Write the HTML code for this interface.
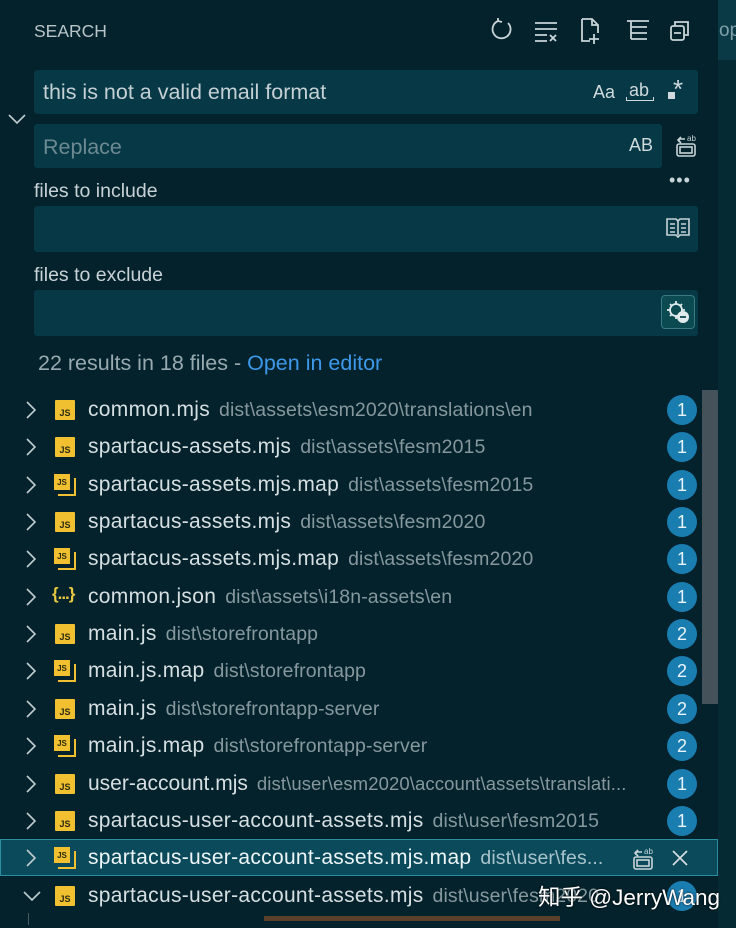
<!DOCTYPE html>
<html><head><meta charset="utf-8"><style>
*{margin:0;padding:0;box-sizing:border-box}
body{width:736px;height:928px;background:#03222b;font-family:"Liberation Sans","Noto Sans CJK SC",sans-serif;color:#d4dde0;position:relative;overflow:hidden}
.a{position:absolute;white-space:nowrap}
.strip{left:718px;top:0;width:18px;height:928px;background:#052a33}
.inp{background:#063845;border-radius:3px}
.lbl{font-size:19.5px;color:#c8d2d6}
.row{position:absolute;left:0;width:718px;height:37px}
.chev{position:absolute;left:24px;top:9px}
.js{position:absolute;left:55px;top:9px;width:20px;height:20px;background:#f0c030;color:#2a2a10;font-size:9px;font-weight:bold;text-align:center;line-height:26px;border-radius:1px}
.jsm{position:absolute;left:54px;top:8px;width:16px;height:16px;background:#f0c030;color:#2a2a10;font-size:8px;font-weight:bold;text-align:center;line-height:18px}
.jsm2{position:absolute;left:58px;top:12px;width:18px;height:18px;border:2px solid #f0c030;border-left:none;border-top:none}
.jn{position:absolute;left:52px;top:6px;color:#e8c840;font-size:17px;font-weight:bold;letter-spacing:-1px}
.nm{position:absolute;left:88px;top:7px;font-size:21px;letter-spacing:0.3px;color:#d6dfe2;white-space:nowrap}
.nm span{font-size:19.5px;letter-spacing:0.1px;color:#86989e;margin-left:9px}
.bd{position:absolute;left:667px;top:4px;width:30px;height:30px;border-radius:50%;background:#1a7db0;color:#e8f4fa;font-size:18px;text-align:center;line-height:30px}
</style></head><body>
<div class="a strip"></div>
<div class="a" style="left:718px;top:0;width:18px;height:60px;background:#0a3a46"></div>
<div class="a" style="left:719px;top:20px;font-size:19px;color:#7fa0aa">op</div>
<div class="a" style="left:34px;top:21px;font-size:17.5px;color:#b8c4c8">SEARCH</div>
<svg class="a" style="left:488px;top:16px" width="210" height="30" viewBox="0 0 210 30" fill="none" stroke="#c8d4d8" stroke-width="1.8">
<path d="M10 5 A9 9 0 1 0 20 7 M10 5 l0 -3 M10 5 l4 1"/>
<path d="M47 7h22M47 13h22M47 19h12M47 25h12M62 19l6 6M68 19l-6 6"/>
<path d="M94 3h10l6 6v8M94 3v22h8M104 3v6h6M106 18v10M101 23h10"/>
<path d="M139 5h22M143 11h16M143 17h16M143 23h16M143 5v18"/>
<rect x="183" y="10" width="13" height="14" rx="2"/><path d="M187 10V6h13v13h-4M186 17h7"/>
</svg>
<svg class="a" style="left:8px;top:112px" width="18" height="14"><path d="M1 3l8 8 8-8" fill="none" stroke="#c0ccd0" stroke-width="1.6"/></svg>
<div class="a inp" style="left:34px;top:70px;width:664px;height:44px"></div>
<div class="a" style="left:43px;top:80px;font-size:21.5px;color:#c4d0d4">this is not a valid email format</div>
<div class="a" style="left:593px;top:82px;font-size:18px;color:#d0dadd">Aa</div>
<div class="a" style="left:629px;top:80px;font-size:18px;color:#d0dadd">ab</div>
<div class="a" style="left:626px;top:97px;width:28px;height:4px;border:1.5px solid #d0dadd;border-top:none"></div>
<div class="a" style="left:668px;top:92px;width:7px;height:7px;background:#d0dadd"></div>
<div class="a" style="left:673px;top:74px;font-size:26px;color:#d0dadd">*</div>
<div class="a inp" style="left:34px;top:124px;width:628px;height:44px"></div>
<div class="a" style="left:43px;top:135px;font-size:21.5px;color:#6d8a92">Replace</div>
<div class="a" style="left:629px;top:135px;font-size:18px;color:#d0dadd">AB</div>
<svg class="a" style="left:673px;top:132px" width="28" height="28" fill="none" stroke="#c8d4d8" stroke-width="1.6"><rect x="4" y="12" width="18" height="12" rx="2"/><rect x="7" y="15" width="12" height="6"/><path d="M6 10V7h6M8 5l-3 3 3 3"/><text x="14" y="9" font-size="8" fill="#c8d4d8" stroke="none" font-family="Liberation Sans">ab</text></svg>
<div class="a" style="left:669px;top:170px;font-size:18px;color:#c8d4d8;letter-spacing:1px">•••</div>
<div class="a lbl" style="left:34px;top:180px">files to include</div>
<div class="a inp" style="left:34px;top:206px;width:664px;height:46px"></div>
<svg class="a" style="left:665px;top:216px" width="26" height="24" fill="none" stroke="#c8d4d8" stroke-width="1.6"><path d="M2 3h9l2 2 2-2h9v16h-9l-2 2-2-2H2z M13 5v14 M5 8h5M5 12h5M5 16h5M16 8h5M16 12h5M16 16h5"/></svg>
<div class="a lbl" style="left:34px;top:264px">files to exclude</div>
<div class="a inp" style="left:34px;top:290px;width:664px;height:46px"></div>
<div class="a" style="left:661px;top:295px;width:34px;height:34px;border:1px solid #3a7a80;border-radius:4px;background:#0c4a52"></div>
<svg class="a" style="left:664px;top:298px" width="28" height="28" fill="none" stroke="#e0eaec" stroke-width="1.8"><circle cx="12" cy="12" r="6"/><path d="M12 3v3M12 18v3M3 12h3M18 12h3M6 6l2 2M16 16l2 2M6 18l2-2M18 6l-2 2"/><circle cx="19" cy="19" r="6" fill="#e0eaec" stroke="none"/><path d="M16 19h6" stroke="#0c4a52"/></svg>
<div class="a" style="left:38px;top:351px;font-size:21.5px;color:#98aab0">22 results in 18 files - <span style="color:#3d98e8">Open in editor</span></div>
<div class="a" style="left:702px;top:390px;width:16px;height:314px;background:#46525a"></div>

<div class="row" style="top:391px"><svg class="chev" width="14" height="20"><path d="M3 2l8 8-8 8" fill="none" stroke="#c0ccd0" stroke-width="1.6"/></svg><div class="js">JS</div><div class="nm">common.mjs<span>dist\assets\esm2020\translations\en</span></div><div class="bd">1</div></div>
<div class="row" style="top:428px"><svg class="chev" width="14" height="20"><path d="M3 2l8 8-8 8" fill="none" stroke="#c0ccd0" stroke-width="1.6"/></svg><div class="js">JS</div><div class="nm">spartacus-assets.mjs<span>dist\assets\fesm2015</span></div><div class="bd">1</div></div>
<div class="row" style="top:466px"><svg class="chev" width="14" height="20"><path d="M3 2l8 8-8 8" fill="none" stroke="#c0ccd0" stroke-width="1.6"/></svg><div class="jsm2"></div><div class="jsm">JS</div><div class="nm">spartacus-assets.mjs.map<span>dist\assets\fesm2015</span></div><div class="bd">1</div></div>
<div class="row" style="top:503px"><svg class="chev" width="14" height="20"><path d="M3 2l8 8-8 8" fill="none" stroke="#c0ccd0" stroke-width="1.6"/></svg><div class="js">JS</div><div class="nm">spartacus-assets.mjs<span>dist\assets\fesm2020</span></div><div class="bd">1</div></div>
<div class="row" style="top:540px"><svg class="chev" width="14" height="20"><path d="M3 2l8 8-8 8" fill="none" stroke="#c0ccd0" stroke-width="1.6"/></svg><div class="jsm2"></div><div class="jsm">JS</div><div class="nm">spartacus-assets.mjs.map<span>dist\assets\fesm2020</span></div><div class="bd">1</div></div>
<div class="row" style="top:578px"><svg class="chev" width="14" height="20"><path d="M3 2l8 8-8 8" fill="none" stroke="#c0ccd0" stroke-width="1.6"/></svg><div class="jn">{...}</div><div class="nm">common.json<span>dist\assets\i18n-assets\en</span></div><div class="bd">1</div></div>
<div class="row" style="top:615px"><svg class="chev" width="14" height="20"><path d="M3 2l8 8-8 8" fill="none" stroke="#c0ccd0" stroke-width="1.6"/></svg><div class="js">JS</div><div class="nm">main.js<span>dist\storefrontapp</span></div><div class="bd">2</div></div>
<div class="row" style="top:652px"><svg class="chev" width="14" height="20"><path d="M3 2l8 8-8 8" fill="none" stroke="#c0ccd0" stroke-width="1.6"/></svg><div class="jsm2"></div><div class="jsm">JS</div><div class="nm">main.js.map<span>dist\storefrontapp</span></div><div class="bd">2</div></div>
<div class="row" style="top:690px"><svg class="chev" width="14" height="20"><path d="M3 2l8 8-8 8" fill="none" stroke="#c0ccd0" stroke-width="1.6"/></svg><div class="js">JS</div><div class="nm">main.js<span>dist\storefrontapp-server</span></div><div class="bd">2</div></div>
<div class="row" style="top:727px"><svg class="chev" width="14" height="20"><path d="M3 2l8 8-8 8" fill="none" stroke="#c0ccd0" stroke-width="1.6"/></svg><div class="jsm2"></div><div class="jsm">JS</div><div class="nm">main.js.map<span>dist\storefrontapp-server</span></div><div class="bd">2</div></div>
<div class="row" style="top:765px"><svg class="chev" width="14" height="20"><path d="M3 2l8 8-8 8" fill="none" stroke="#c0ccd0" stroke-width="1.6"/></svg><div class="js">JS</div><div class="nm" style="letter-spacing:0">user-account.mjs<span style="font-size:18.5px">dist\user\esm2020\account\assets\translati...</span></div><div class="bd">1</div></div>
<div class="row" style="top:802px"><svg class="chev" width="14" height="20"><path d="M3 2l8 8-8 8" fill="none" stroke="#c0ccd0" stroke-width="1.6"/></svg><div class="js">JS</div><div class="nm">spartacus-user-account-assets.mjs<span>dist\user\fesm2015</span></div><div class="bd">1</div></div>
<div class="row" style="top:839px;background:#0b4a5a;border:1px solid #2a8ea0"><svg class="chev" width="14" height="20" style="top:8px;left:23px"><path d="M3 2l8 8-8 8" fill="none" stroke="#c0ccd0" stroke-width="1.6"/></svg><div class="jsm2" style="top:11px;left:57px"></div><div class="jsm" style="top:7px;left:53px">JS</div><div class="nm" style="top:6px;left:87px;color:#eef5f7">spartacus-user-account-assets.mjs.map<span style="color:#a8c4cc">dist\user\fes...</span></div>
<svg class="a" style="left:629px;top:5px" width="28" height="28" fill="none" stroke="#c8d4d8" stroke-width="1.6"><rect x="4" y="12" width="18" height="12" rx="2"/><rect x="7" y="15" width="12" height="6"/><path d="M6 10V7h6M8 5l-3 3 3 3"/><text x="14" y="9" font-size="8" fill="#c8d4d8" stroke="none" font-family="Liberation Sans">ab</text></svg>
<svg class="a" style="left:670px;top:9px" width="18" height="18"><path d="M2 2l14 14M16 2L2 16" stroke="#d0dadd" stroke-width="1.8"/></svg></div>
<div class="row" style="top:877px"><svg class="chev" width="20" height="20" style="left:22px"><path d="M2 6l8 8 8-8" fill="none" stroke="#c0ccd0" stroke-width="1.6"/></svg><div class="js">JS</div><div class="nm">spartacus-user-account-assets.mjs<span>dist\user\fesm2020</span></div><div class="bd">1</div></div>
<div class="a" style="left:28px;top:913px;width:1px;height:12px;background:#4a5a60"></div>
<div class="a" style="left:264px;top:916px;width:296px;height:5px;background:#5a4028"></div>
<div class="a" style="left:538px;top:880px;font-size:22.5px;color:#ffffff;text-shadow:0 0 2px #000;white-space:nowrap">知乎 @JerryWang</div>
</body></html>
